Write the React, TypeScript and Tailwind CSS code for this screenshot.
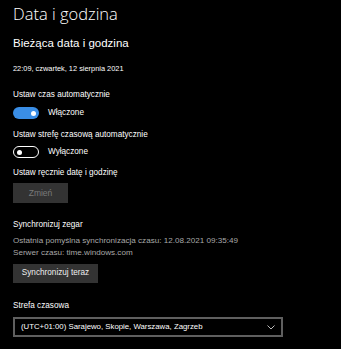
import React from 'react';

const font = { fontFamily: '"Liberation Sans", Arial, sans-serif' };
const titleFont = { fontFamily: '"Open Sans", "Liberation Sans", sans-serif' };

const Toggle: React.FC<{ on: boolean; label: string }> = ({ on, label }) => (
    <div className="flex items-center h-[12px]">
        {on ? (
            <div className="w-[26px] h-[12px] rounded-full bg-[#3a8ee6] flex items-center justify-end pr-[3px]">
                <span className="w-[5px] h-[5px] rounded-full bg-white" />
            </div>
        ) : (
            <div className="w-[26px] h-[12px] rounded-full border border-white flex items-center pl-[3px]">
                <span className="w-[5px] h-[5px] rounded-full bg-white" />
            </div>
        )}
        <span className="ml-[9px] text-[8.2px] leading-[12px] text-white">{label}</span>
    </div>
);

const App: React.FC = () => {
    return (
        <div className="w-[341px] h-[349px] bg-black text-white overflow-hidden pl-[13px] pt-[4px]" style={font}>
            <h1 className="text-[16.5px] leading-[20px] font-light" style={titleFont}>Data i godzina</h1>
            <h2 className="mt-[12px] text-[11.5px] leading-[14px]">Bieżąca data i godzina</h2>
            <p className="mt-[13px] text-[7.4px] leading-[12px]">22:09, czwartek, 12 sierpnia 2021</p>

            <p className="mt-[14px] text-[8.2px] leading-[12px]">Ustaw czas automatycznie</p>
            <div className="mt-[6px]">
                <Toggle on label="Włączone" />
            </div>

            <p className="mt-[10px] text-[8.2px] leading-[12px]">Ustaw strefę czasową automatycznie</p>
            <div className="mt-[5px]">
                <Toggle on={false} label="Wyłączone" />
            </div>

            <p className="mt-[9px] text-[8.2px] leading-[12px]">Ustaw ręcznie datę i godzinę</p>
            <button className="mt-[4px] w-[55px] h-[20px] bg-[#333333] text-[#7a7a7a] text-[8.5px] flex items-center justify-center">
                Zmień
            </button>

            <p className="mt-[16px] text-[8.2px] leading-[12px]">Synchronizuj zegar</p>
            <p className="mt-[4px] text-[8.1px] leading-[12px] text-[#a8a8a8]">
                Ostatnia pomyślna synchronizacja czasu: 12.08.2021 09:35:49
            </p>
            <p className="text-[8.1px] leading-[12px] text-[#a8a8a8]">Serwer czasu: time.windows.com</p>
            <button className="mt-[5px] w-[85px] h-[19px] bg-[#333333] text-[#f0f0f0] text-[8.2px] flex items-center justify-center">
                Synchronizuj teraz
            </button>

            <p className="mt-[17px] text-[8.2px] leading-[12px]">Strefa czasowa</p>
            <div className="mt-[5px] w-[270px] h-[20px] border-2 border-[#5f5f5f] flex items-center justify-between pl-[6px] pr-[6px]">
                <span className="text-[7.8px] leading-[12px]">(UTC+01:00) Sarajewo, Skopie, Warszawa, Zagrzeb</span>
                <svg width="8" height="5" viewBox="0 0 8 5" fill="none" stroke="#cfcfcf" strokeWidth="0.9">
                    <path d="M0.5 0.5 L4 4 L7.5 0.5" />
                </svg>
            </div>
        </div>
    );
};

export default App;
